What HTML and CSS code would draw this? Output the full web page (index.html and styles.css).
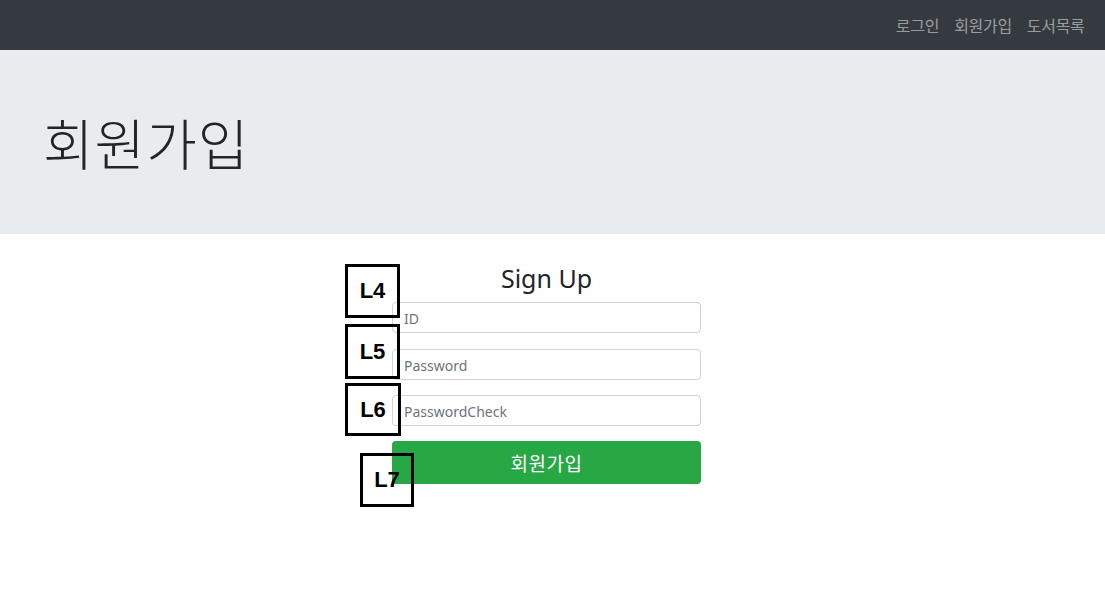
FILE: index.html
```html
<!DOCTYPE html>
<html lang="ko">
<head>
<meta charset="utf-8">
<title>회원가입</title>
<link rel="stylesheet" href="styles.css">
</head>
<body>
<nav class="navbar">
  <a class="nav-link" href="#">로그인</a>
  <a class="nav-link" href="#">회원가입</a>
  <a class="nav-link" href="#">도서목록</a>
</nav>
<header class="jumbotron">
  <h1 class="display">회원가입</h1>
</header>
<main class="content">
  <form class="signup">
    <h3 class="signup-title">Sign Up</h3>
    <input class="field" type="text" placeholder="ID">
    <input class="field" type="password" placeholder="Password">
    <input class="field" type="password" placeholder="PasswordCheck">
    <button class="btn-submit" type="button">회원가입</button>
  </form>
</main>
<div class="tag tag-l4">L4</div>
<div class="tag tag-l5">L5</div>
<div class="tag tag-l6">L6</div>
<div class="tag tag-l7">L7</div>
</body>
</html>
```

FILE: styles.css
```css
* { box-sizing: border-box; }
html, body { margin: 0; padding: 0; }
body {
  font-family: "Segoe UI", "Noto Sans", "Noto Sans CJK KR", sans-serif;
  color: #212529;
  background: #fff;
  width: 1105px;
  height: 597px;
  overflow: hidden;
  position: relative;
}
.navbar {
  height: 50px;
  background: #343a40;
  display: flex;
  justify-content: flex-end;
  align-items: center;
  padding-right: 13px;
}
.nav-link {
  color: rgba(255,255,255,0.5);
  text-decoration: none;
  font-family: "Noto Sans CJK KR", sans-serif;
  font-size: 16px;
  letter-spacing: -0.3px;
  padding: 0 7.5px;
  line-height: 20px;
}
.jumbotron {
  height: 184px;
  background: #e9ecef;
  display: flex;
  align-items: center;
  padding-left: 43px;
}
.display {
  margin: 0;
  font-family: "Noto Sans CJK KR", sans-serif;
  font-weight: 300;
  font-size: 55px;
  line-height: 1;
  letter-spacing: 1px;
  padding-bottom: 2px;
}
.content {
  padding-top: 28px;
}
.signup {
  width: 309px;
  margin-left: 392px;
  display: flex;
  flex-direction: column;
}
.signup-title {
  margin: 0 0 8px;
  font-weight: 400;
  font-size: 25px;
  line-height: 32px;
  text-align: center;
}
.field {
  height: 31px;
  margin-bottom: 15.5px;
  border: 1px solid #ced4da;
  border-radius: 4px;
  padding: 2px 11px 0;
  font-family: inherit;
  font-size: 14px;
  color: #495057;
  background: #fff;
}
.field::placeholder { color: #6c757d; }
.btn-submit {
  height: 43px;
  margin-top: -1px;
  background: #28a745;
  color: #fff;
  border: none;
  border-radius: 4px;
  font-family: "Noto Sans CJK KR", sans-serif;
  font-size: 19px;
  letter-spacing: 0.5px;
}
.tag {
  position: absolute;
  border: 3px solid #000;
  display: flex;
  align-items: center;
  justify-content: center;
  font-family: "Liberation Sans", Arial, sans-serif;
  font-weight: bold;
  font-size: 22px;
  color: #000;
}
.tag-l4 { left: 345px; top: 264px; width: 55px; height: 54px; }
.tag-l5 { left: 345px; top: 324px; width: 55px; height: 55px; }
.tag-l6 { left: 345px; top: 383px; width: 56px; height: 53px; }
.tag-l7 { left: 360px; top: 453px; width: 54px; height: 54px; }
```
